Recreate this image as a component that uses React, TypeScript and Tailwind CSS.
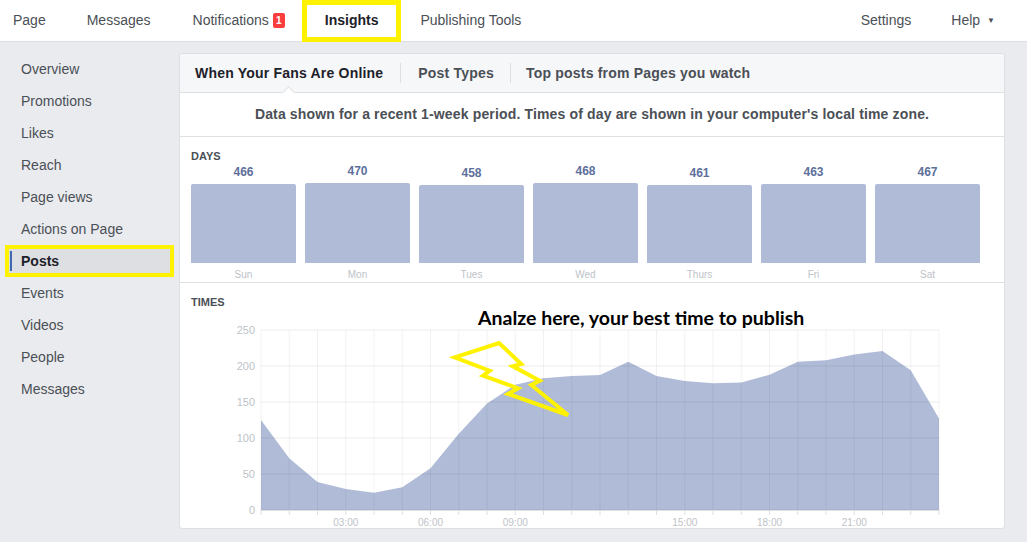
import React from "react";

const days: [string, number][] = [
  ["Sun", 466],
  ["Mon", 470],
  ["Tues", 458],
  ["Wed", 468],
  ["Thurs", 461],
  ["Fri", 463],
  ["Sat", 467],
];

const hours = [125, 72, 39, 29, 24, 31.5, 58, 106, 148, 174, 183, 186, 187.5, 206, 186, 179, 176, 177, 188, 206, 208, 216, 221, 194, 127];

const sideItems = ["Overview", "Promotions", "Likes", "Reach", "Page views", "Actions on Page", "Posts", "Events", "Videos", "People", "Messages"];

const X0 = 81;
const STEP = 28.25;
const Y0 = 201;
const SCALE = 0.72;

function TimesChart() {
  const pts = hours.map((v, i) => `${X0 + i * STEP},${Y0 - v * SCALE}`);
  const area = `M${X0},${Y0} L${pts.join(" L")} L${X0 + 24 * STEP},${Y0} Z`;
  const ticks = [0, 50, 100, 150, 200, 250];
  const labels: [number, string][] = [
    [3, "03:00"],
    [6, "06:00"],
    [9, "09:00"],
    [15, "15:00"],
    [18, "18:00"],
    [21, "21:00"],
  ];
  return (
    <svg width="824" height="219" className="block overflow-visible" style={{ fontFamily: "'Liberation Sans', Arial, sans-serif" }}>
      <path d={area} fill="#b0bcd7" />
      {ticks.map((t) => (
        <g key={t}>
          <line x1={X0} x2={X0 + 24 * STEP} y1={Y0 - t * SCALE} y2={Y0 - t * SCALE} stroke="rgba(0,0,0,0.07)" />
          <text x={75} y={Y0 - t * SCALE + 4} textAnchor="end" fontSize="11" fill="#bec3c9">
            {t}
          </text>
        </g>
      ))}
      {hours.map((_, i) => (
        <g key={i}>
          <line x1={X0 + i * STEP} x2={X0 + i * STEP} y1={Y0 - 250 * SCALE} y2={Y0} stroke="rgba(0,0,0,0.05)" />
          <line x1={X0 + i * STEP} x2={X0 + i * STEP} y1={Y0} y2={Y0 + 5} stroke="#dddfe2" />
        </g>
      ))}
      <line x1={X0} x2={X0 + 24 * STEP} y1={Y0 + 0.5} y2={Y0 + 0.5} stroke="#dddfe2" />
      {labels.map(([i, l]) => (
        <text key={l} x={X0 + i * STEP} y={Y0 + 16} textAnchor="middle" fontSize="10" fill="#bec3c9">
          {l}
        </text>
      ))}
      {/* lightning bolt annotation */}
      <polygon
        points="274.7,48.3 319,34 341.3,55 333,57.3 359.7,71.7 351.3,76 388,106 328,85 338,79.3 303,66.7 309.7,61.7"
        fill="none"
        stroke="#fff200"
        strokeWidth="4"
        strokeLinejoin="miter"
      />
    </svg>
  );
}

export default function App() {
  return (
    <div className="min-h-[542px] bg-[#e9ebee] text-[14px] text-[#4b4f56]" style={{ fontFamily: "'Liberation Sans', Arial, sans-serif" }}>
      {/* Top nav */}
      <div className="flex h-[42px] items-center border-b border-[#dddfe2] bg-white pl-[13px] pr-[32px]">
        <span>Page</span>
        <span className="ml-[41px]">Messages</span>
        <span className="ml-[42px] flex items-center">
          Notifications
          <span className="ml-[4px] flex h-[15px] w-[12px] items-center justify-center rounded-[2px] bg-[#fa3e3e] text-[10px] font-bold text-white">1</span>
        </span>
        <div className="ml-[17px] flex h-[42px] items-center border-[5px] border-[#fff200] px-[18px] font-bold text-[#1d2129]">Insights</div>
        <span className="ml-[19px]">Publishing Tools</span>
        <span className="ml-auto">Settings</span>
        <span className="ml-[40px] flex items-center">
          Help<span className="ml-[7px] text-[8px]">▼</span>
        </span>
      </div>

      <div className="flex">
        {/* Sidebar */}
        <div className="w-[179px] pt-[11px]">
          {sideItems.map((s) =>
            s === "Posts" ? (
              <div key={s} className="ml-[5px] flex h-8 w-[169px] items-center border-4 border-[#fff200] bg-[#dddfe2] font-bold text-[#1d2129]">
                <div className="ml-[1px] h-[20px] w-[2px] bg-[#4267b2]" />
                <span className="ml-[9px]">{s}</span>
              </div>
            ) : (
              <div key={s} className="flex h-8 items-center pl-[21px]">
                {s}
              </div>
            )
          )}
        </div>

        {/* Main card */}
        <div className="mt-[11px] w-[826px] overflow-hidden rounded-[3px] border border-[#dddfe2] bg-white">
          <div className="relative flex h-[39px] items-center border-b border-[#dddfe2] bg-[#f6f7f9] pl-[15px]">
            <span className="font-bold tracking-[0.2px] text-[#1d2129]">When Your Fans Are Online</span>
            <div className="mx-[17px] h-[20px] w-px bg-[#dddfe2]" />
            <span className="font-bold tracking-[0.2px] text-[#4b4f56]">Post Types</span>
            <div className="ml-[16px] mr-[15px] h-[20px] w-px bg-[#dddfe2]" />
            <span className="font-bold tracking-[0.2px] text-[#4b4f56]">Top posts from Pages you watch</span>
            <div className="absolute bottom-[-5px] left-[104px] h-[9px] w-[9px] rotate-45 border-l border-t border-[#dddfe2] bg-white" />
          </div>

          <div className="flex h-[44px] items-center justify-center border-b border-[#dddfe2] font-bold tracking-[0.15px]">
            Data shown for a recent 1-week period. Times of day are shown in your computer's local time zone.
          </div>

          {/* Days */}
          <div className="border-b border-[#dddfe2] px-[11px] pb-[1px] pt-[13px]">
            <div className="text-[11px] font-bold leading-[13px] text-[#4b4f56]">DAYS</div>
            <div className="mt-[1px] flex items-end gap-[9px]">
              {days.map(([d, v]) => (
                <div key={d} className="flex w-[105px] flex-col items-center">
                  <div className="text-[12px] font-bold leading-[14px] text-[#5d6f9c]">{v}</div>
                  <div className="mt-[5px] w-full rounded-t-[2px] bg-[#b0bcd7]" style={{ height: `${v * 0.1709}px` }} />
                  <div className="mt-[6px] text-[10px] leading-[12px] text-[#bec3c9]">{d}</div>
                </div>
              ))}
            </div>
          </div>

          {/* Times */}
          <div className="relative pt-[13px]">
            <div className="pl-[11px] text-[11px] font-bold leading-[13px] text-[#4b4f56]">TIMES</div>
            <TimesChart />
            <div
              className="absolute left-[298px] top-[23px] text-[19.5px] font-bold leading-[24px] text-black"
              style={{ fontFamily: "Lato, 'Open Sans', sans-serif" }}
            >
              Analze here, your best time to publish
            </div>
          </div>
        </div>
      </div>
    </div>
  );
}
